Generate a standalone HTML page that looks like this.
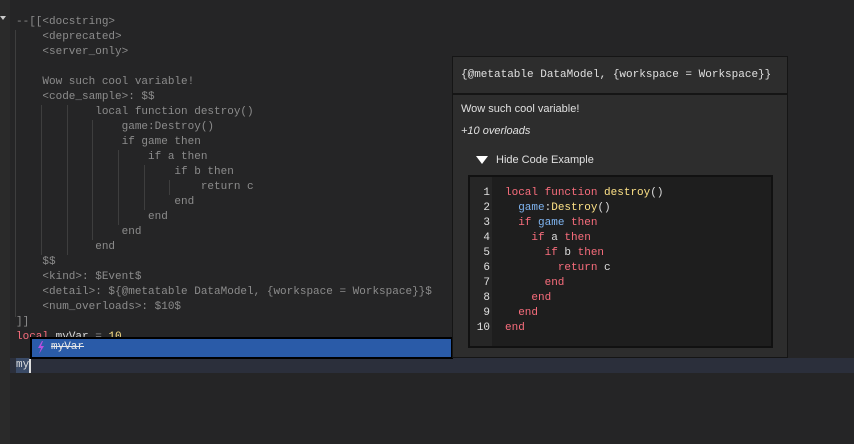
<!DOCTYPE html>
<html><head><meta charset="utf-8"><style>
body{margin:0;width:854px;height:444px;background:#252526;overflow:hidden;position:relative;font-family:"Liberation Mono",monospace;font-size:11px}
.gut{position:absolute;left:0;top:0;width:10px;height:444px;background:#2a2a2a}
.ln{position:absolute;left:16px;white-space:pre;color:#8c8c8c;line-height:15px;height:15px;margin-top:1px}
.g{position:absolute;width:1px;background:#3e3e3e}
.tt{position:absolute;left:452px;top:56px;width:336px;height:302px;background:#2d2d2d;border:1px solid #151515;box-sizing:border-box}
.hd{height:36px;border-bottom:2px solid #151515;color:#e0e0e0;font-size:11px;line-height:36px;padding-left:8px;white-space:pre}
.sans{font-family:"Liberation Sans",sans-serif;font-size:11px;color:#e0e0e0;position:absolute}
.cb{position:absolute;left:15px;top:118px;width:305px;height:173px;background:#1e1e1e;border:2px solid #111;box-sizing:border-box}
.cg{position:absolute;left:0;top:0;width:22px;height:100%;background:#262626}
.cl{position:absolute;white-space:pre;line-height:15px;font-size:11px;color:#dcdcdc}
.k{color:#f86d7c}.f{color:#fde186}.v{color:#7fb4f0}.n{color:#e0e0e0}
</style></head><body>
<div class="gut"></div>
<div style="position:absolute;left:0;top:16px;width:0;height:0;border-left:3px solid transparent;border-right:3px solid transparent;border-top:4px solid #ccc"></div>
<div class="g" style="left:15px;top:30px;height:287px"></div>
<div class="g" style="left:41px;top:105px;height:150px"></div>
<div class="g" style="left:67px;top:105px;height:150px"></div>
<div class="g" style="left:92px;top:120px;height:120px"></div>
<div class="g" style="left:118px;top:150px;height:75px"></div>
<div class="g" style="left:144px;top:165px;height:45px"></div>
<div class="g" style="left:169px;top:180px;height:15px"></div>
<div class="ln" style="top:14px">--[[&lt;docstring&gt;</div>
<div class="ln" style="top:29px">    &lt;deprecated&gt;</div>
<div class="ln" style="top:44px">    &lt;server_only&gt;</div>
<div class="ln" style="top:74px">    Wow such cool variable!</div>
<div class="ln" style="top:89px">    &lt;code_sample&gt;: $$</div>
<div class="ln" style="top:104px">            local function destroy()</div>
<div class="ln" style="top:119px">                game:Destroy()</div>
<div class="ln" style="top:134px">                if game then</div>
<div class="ln" style="top:149px">                    if a then</div>
<div class="ln" style="top:164px">                        if b then</div>
<div class="ln" style="top:179px">                            return c</div>
<div class="ln" style="top:194px">                        end</div>
<div class="ln" style="top:209px">                    end</div>
<div class="ln" style="top:224px">                end</div>
<div class="ln" style="top:239px">            end</div>
<div class="ln" style="top:254px">    $$</div>
<div class="ln" style="top:269px">    &lt;kind&gt;: $Event$</div>
<div class="ln" style="top:284px">    &lt;detail&gt;: ${@metatable DataModel, {workspace = Workspace}}$</div>
<div class="ln" style="top:299px">    &lt;num_overloads&gt;: $10$</div>
<div class="ln" style="top:314px">]]</div>
<div class="ln" style="top:329px"><span class="k">local</span> <span style="color:#dcdcdc">myVar</span> = <span class="f">10</span></div>
<div style="position:absolute;left:10px;top:358px;width:844px;height:15px;background:#2b2f3b"></div>
<div class="ln" style="top:358px;margin-top:0;color:#dcdcdc;background:#3a4a66">my</div>
<div style="position:absolute;left:29px;top:359px;width:2px;height:14px;background:#ddd"></div>
<div style="position:absolute;left:30px;top:337px;width:423px;height:22px;background:#2a5ba8;border:2px solid #000;box-sizing:border-box"></div>
<svg style="position:absolute;left:37px;top:341px" width="8" height="13" viewBox="0 0 8 13"><path d="M5 0 L1 7 L4 7 L2 13 L7 5 L4 5 L6 0 Z" fill="#b84fe0"/></svg>
<div class="ln" style="left:51px;top:339px;color:#e8e8e8;text-decoration:line-through">myVar</div>
<div class="tt">
<div class="hd">{@metatable DataModel, {workspace = Workspace}}</div>
<div class="sans" style="left:8px;top:46px">Wow such cool variable!</div>
<div class="sans" style="left:8px;top:68px;font-style:italic">+10 overloads</div>
<div style="position:absolute;left:23px;top:99px;width:0;height:0;border-left:6px solid transparent;border-right:6px solid transparent;border-top:8px solid #fff"></div>
<div class="sans" style="left:43px;top:97px">Hide Code Example</div>
<div class="cb"><div class="cg"></div>
<div class="cl n" style="left:4px;top:9px;text-align:right;width:16px">1
2
3
4
5
6
7
8
9
10</div>
<div class="cl" style="left:35px;top:9px"><span class="k">local</span> <span class="k">function</span> <span class="f">destroy</span>()
  <span class="v">game</span>:<span class="f">Destroy</span>()
  <span class="k">if</span> <span class="v">game</span> <span class="k">then</span>
    <span class="k">if</span> a <span class="k">then</span>
      <span class="k">if</span> b <span class="k">then</span>
        <span class="k">return</span> c
      <span class="k">end</span>
    <span class="k">end</span>
  <span class="k">end</span>
<span class="k">end</span></div>
</div>
</div>
</body></html>
